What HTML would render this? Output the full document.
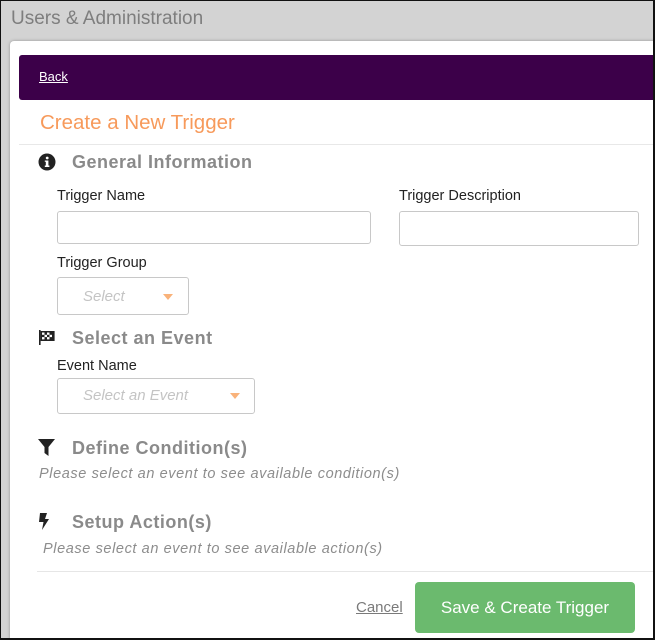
<!DOCTYPE html>
<html><head><style>
*{margin:0;padding:0;box-sizing:border-box}
html,body{width:655px;height:640px;overflow:hidden}
body{background:#d3d3d3;font-family:"Liberation Sans",sans-serif;position:relative}
.frame{position:absolute;left:0;top:0;width:655px;height:640px;border:1px solid #111;border-right-width:2px;border-bottom-width:2px;z-index:10;pointer-events:none}
.t{position:absolute;white-space:nowrap}
.card{position:absolute;left:10px;top:41px;width:645px;height:599px;background:#fff;border-radius:4px 0 0 0;box-shadow:0 0 3px rgba(0,0,0,.3)}
.lbl{font-size:14.5px;color:#222}
.h{font-size:18px;color:#8a8a8a;font-weight:bold;letter-spacing:0.5px}
.inp{position:absolute;border:1px solid #c8c8c8;border-radius:3px;background:#fff}
.ph{font-size:15px;font-style:italic;color:#c4c4c4}
.caret{position:absolute;width:0;height:0;border-left:5px solid transparent;border-right:5px solid transparent;border-top:6px solid #f9b27a}
.note{font-size:14.5px;font-style:italic;color:#8d8d8d;letter-spacing:0.6px}
</style></head><body>
<div class="frame"></div>
<div class="t" style="left:11px;top:8px;font-size:19px;color:#7e7e7e">Users &amp; Administration</div>
<div class="card"></div>
<div class="t" style="left:19px;top:55px;width:640px;height:45px;background:#3c0049;border-radius:3px"></div>
<div class="t" style="left:39px;top:69px;font-size:13px;color:#fff;text-decoration:underline">Back</div>
<div class="t" style="left:40px;top:111px;font-size:20.5px;color:#f79a5b">Create a New Trigger</div>
<div class="t" style="left:19px;top:144px;width:640px;height:1px;background:#e8e8e8"></div>
<svg class="t" style="left:38px;top:153px" width="18" height="18"><circle cx="9" cy="9" r="8.5" fill="#222"/><rect x="7.8" y="7.5" width="2.6" height="6" fill="#fff"/><rect x="6.8" y="12.5" width="4.6" height="1.5" fill="#fff"/><rect x="6.8" y="7.5" width="2" height="1.3" fill="#fff"/><circle cx="9.2" cy="5" r="1.4" fill="#fff"/></svg>
<div class="t h" style="left:72px;top:152px">General Information</div>
<div class="t lbl" style="left:57px;top:188px">Trigger Name</div>
<div class="inp" style="left:57px;top:211px;width:314px;height:33px"></div>
<div class="t lbl" style="left:399px;top:188px">Trigger Description</div>
<div class="inp" style="left:399px;top:211px;width:240px;height:35px"></div>
<div class="t lbl" style="left:57px;top:255px">Trigger Group</div>
<div class="inp" style="left:57px;top:277px;width:132px;height:38px"></div>
<div class="t ph" style="left:83px;top:288px">Select</div>
<div class="caret" style="left:163px;top:294px"></div>
<svg class="t" style="left:38px;top:329px" width="18" height="16"><rect x="1" y="1" width="1.6" height="15" fill="#222"/><rect x="2.6" y="2" width="14" height="10" fill="#222"/><g fill="#fff"><rect x="4" y="3.5" width="2.5" height="2.3"/><rect x="9" y="3.5" width="2.5" height="2.3"/><rect x="6.5" y="5.8" width="2.5" height="2.3"/><rect x="11.5" y="5.8" width="2.5" height="2.3"/><rect x="4" y="8.1" width="2.5" height="2.3"/><rect x="9" y="8.1" width="2.5" height="2.3"/></g></svg>
<div class="t h" style="left:72px;top:328px">Select an Event</div>
<div class="t lbl" style="left:57px;top:358px">Event Name</div>
<div class="inp" style="left:57px;top:378px;width:198px;height:36px"></div>
<div class="t ph" style="left:83px;top:387px">Select an Event</div>
<div class="caret" style="left:230px;top:393px"></div>
<svg class="t" style="left:38px;top:439px" width="18" height="18"><path d="M0 0H17L10.5 8V17L6.5 14V8Z" fill="#222"/></svg>
<div class="t h" style="left:72px;top:438px">Define Condition(s)</div>
<div class="t note" style="left:39px;top:466px">Please select an event to see available condition(s)</div>
<svg class="t" style="left:38px;top:513px" width="12" height="18"><path d="M2 0H9L7 6H11L4 17L5.5 9H1Z" fill="#222"/></svg>
<div class="t h" style="left:72px;top:512px">Setup Action(s)</div>
<div class="t note" style="left:43px;top:541px">Please select an event to see available action(s)</div>
<div class="t" style="left:37px;top:571px;width:620px;height:1px;background:#e6e6e6"></div>
<div class="t" style="left:356px;top:599px;font-size:15px;color:#7a7a7a;text-decoration:underline">Cancel</div>
<div class="t" style="left:415px;top:582px;width:220px;height:51px;background:#6bba6e;border-radius:4px;color:#fff;font-size:17px;text-align:center;line-height:51px">Save &amp; Create Trigger</div>
</body></html>
